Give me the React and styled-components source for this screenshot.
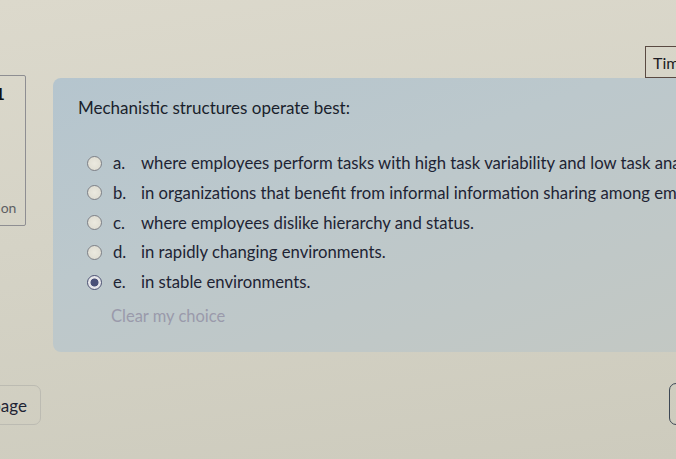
import styled, { createGlobalStyle } from 'styled-components';

const GlobalStyle = createGlobalStyle`
  html, body {
    margin: 0;
    padding: 0;
    background: #d2d0c3;
  }
  body {
    font-family: Lato, "Open Sans", sans-serif;
    color: #1e2434;
  }
`;

const options = [
  { letter: 'a.', text: 'where employees perform tasks with high task variability and low task analyzability.' },
  { letter: 'b.', text: 'in organizations that benefit from informal information sharing among employees.' },
  { letter: 'c.', text: 'where employees dislike hierarchy and status.' },
  { letter: 'd.', text: 'in rapidly changing environments.' },
  { letter: 'e.', text: 'in stable environments.', checked: true },
];

const App = () => (
  <>
    <GlobalStyle />
    <Page>
      <Header>
        <Timer>Time left</Timer>
      </Header>
      <Body>
        <InfoBox>
          <InfoMark>1</InfoMark>
          <InfoLabel>Flag question</InfoLabel>
        </InfoBox>
        <QuestionPanel>
          <QuestionText>Mechanistic structures operate best:</QuestionText>
          <AnswerList>
            {options.map(o => (
              <Answer key={o.letter}>
                <Radio checked={o.checked} />
                <Letter>{o.letter}</Letter>
                <AnswerText>{o.text}</AnswerText>
              </Answer>
            ))}
          </AnswerList>
          <ClearLink>Clear my choice</ClearLink>
        </QuestionPanel>
      </Body>
      <Footer>
        <PrevButton>Previous page</PrevButton>
        <NextButton>Next page</NextButton>
      </Footer>
    </Page>
  </>
);

const Page = styled.div`
  width: 676px;
  height: 459px;
  overflow: hidden;
  box-sizing: border-box;
  padding-top: 46px;
  display: flex;
  flex-direction: column;
  background: linear-gradient(172deg, #dcd9cc 0%, #d5d3c6 45%, #cdcbbd 100%);
`;

const Header = styled.div`
  height: 32px;
  display: flex;
  justify-content: flex-end;
`;

const Timer = styled.div`
  width: 90px;
  height: 32px;
  margin-right: -59px;
  box-sizing: border-box;
  border: 1.5px solid #5a4a42;
  padding-left: 7px;
  display: flex;
  align-items: center;
  font-size: 16px;
  color: #1c1c24;
  white-space: nowrap;
  overflow: hidden;
  flex-shrink: 0;
`;

const Body = styled.div`
  display: flex;
  align-items: flex-start;
`;

const InfoBox = styled.div`
  width: 80px;
  height: 151px;
  margin-left: -54px;
  margin-top: -3px;
  box-sizing: border-box;
  border: 1px solid #8e8e92;
  border-radius: 2px;
  flex-shrink: 0;
  display: flex;
  flex-direction: column;
  justify-content: space-between;
  padding: 7px 0 9px 8px;
  font-size: 14px;
  color: #5e5f63;
  white-space: nowrap;
  overflow: hidden;
`;

const InfoMark = styled.span`
  font-weight: 700;
  color: #111;
  font-size: 17px;
  margin-left: 40px;
`;

const InfoLabel = styled.span`
  margin-left: -21px;
`;

const QuestionPanel = styled.div`
  width: 660px;
  height: 274px;
  margin-left: 27px;
  flex-shrink: 0;
  box-sizing: border-box;
  border-radius: 8px 0 0 8px;
  background: linear-gradient(160deg, #b5c5ce 0%, #bcc8cc 40%, #c3c8c3 100%);
  padding: 18px 0 0 25px;
  display: flex;
  flex-direction: column;
`;

const QuestionText = styled.div`
  font-size: 17px;
  line-height: 24px;
  color: #1a1f2c;
  white-space: nowrap;
`;

const AnswerList = styled.div`
  margin-top: 32px;
  padding-left: 9px;
  display: flex;
  flex-direction: column;
  gap: 7.75px;
`;

const Answer = styled.div`
  display: flex;
  align-items: center;
  height: 22px;
  white-space: nowrap;
`;

const Radio = styled.span`
  width: 15px;
  height: 15px;
  box-sizing: border-box;
  border-radius: 50%;
  border: 1.5px solid ${({ checked }) => (checked ? '#4d5273' : '#7e8086')};
  background: ${({ checked }) =>
    checked
      ? 'radial-gradient(circle, #4a5078 0 3.6px, #e6e6ea 4.4px)'
      : 'radial-gradient(circle, #ebe9df 0%, #dcdacf 100%)'};
  flex-shrink: 0;
`;

const Letter = styled.span`
  width: 28px;
  margin-left: 11px;
  flex-shrink: 0;
  font-size: 16.7px;
  color: #1e2434;
`;

const AnswerText = styled.span`
  font-size: 16.7px;
  color: #1e2434;
  flex-shrink: 0;
`;

const ClearLink = styled.a`
  margin-top: 13px;
  margin-left: 33px;
  font-size: 16.5px;
  color: #9a9aab;
  cursor: pointer;
`;

const Footer = styled.div`
  margin-top: 33px;
  display: flex;
  justify-content: space-between;
  align-items: flex-start;
`;

const PrevButton = styled.button`
  width: 112px;
  height: 40px;
  margin-left: -71px;
  flex-shrink: 0;
  border: 1px solid #bcbbb2;
  border-radius: 7px;
  background: transparent;
  font-family: Lato, "Open Sans", sans-serif;
  font-size: 17px;
  color: #1e2434;
  padding: 0 13px 0 0;
  text-align: right;
  white-space: nowrap;
  overflow: hidden;
  direction: rtl;
`;

const NextButton = styled.button`
  width: 90px;
  height: 42px;
  margin-top: -2px;
  margin-right: -83px;
  flex-shrink: 0;
  border: 1.5px solid #3d4754;
  border-radius: 7px;
  background: transparent;
  font-family: Lato, "Open Sans", sans-serif;
  font-size: 16px;
  color: #1e2434;
  white-space: nowrap;
`;

export default App;
